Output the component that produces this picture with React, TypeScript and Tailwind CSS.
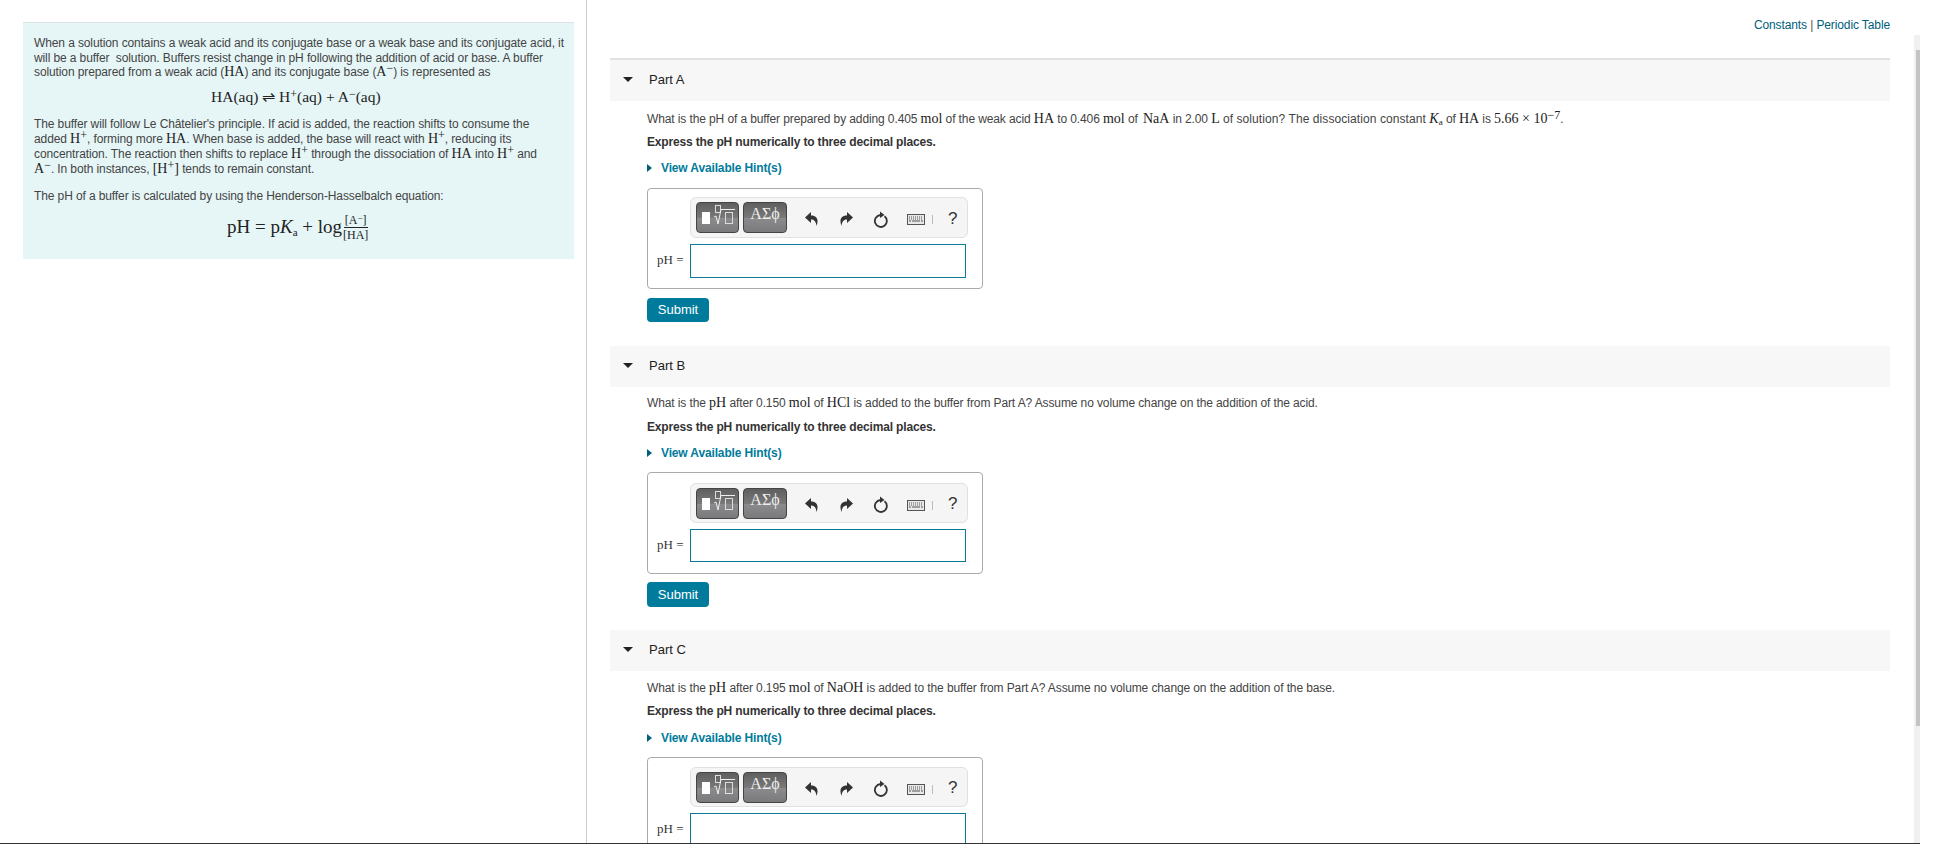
import { ReactNode } from 'react';

const M = ({ children }: { children: ReactNode }) => (
  <span className="font-['Liberation_Serif',serif] text-[14px] leading-none tracking-normal text-[#222]">{children}</span>
);

const Sup = ({ children }: { children: ReactNode }) => (
  <sup className="top-[-4px] text-[12px] leading-none font-['Liberation_Serif',serif]">{children}</sup>
);

const ReplyIcon = ({ flip }: { flip?: boolean }) => (
  <svg width="13" height="14" viewBox="0 0 13 14" className={flip ? '-scale-x-100' : ''}>
    <path d="M6 0L0 5.5 6 11V7.5c3 0 5 1.5 5.5 6.5 2-5 1.500-10.500-5.500-10.500z" fill="#333" />
  </svg>
);

const KeyboardIcon = () => (
  <svg width="18" height="11" viewBox="0 0 18 11" className="shrink-0">
    <rect x="0.5" y="0.5" width="17" height="10" fill="#e8e8e8" stroke="#555" />
    <path d="M2 3h14M2 5h14" stroke="#555" strokeDasharray="1 1" />
    <path d="M2 7h2M5 7h8M14 7h2" stroke="#555" />
  </svg>
);

const ResetIcon = () => (
  <svg width="15" height="17" viewBox="0 0 15 17">
    <path d="M11.500 5.200A6 6 0 1 1 7.500 4" fill="none" stroke="#333" strokeWidth="1.800" />
    <path d="M7 0.500l4.500 3.500-4.500 3z" fill="#333" />
  </svg>
);

const gloss = "bg-[linear-gradient(#5f5f5f_0%,#7a7a7a_52%,#8b8b8e_53%,#7a7a7d_100%)]";

const Toolbar = ({ className }: { className: string }) => (
  <div className={`ml-[42px] w-[278px] rounded-md border border-[#e0e0e0] bg-[#f5f5f5] flex items-center pl-[5px] ${className}`}>
    <div className={`w-[43px] h-[31px] rounded border border-[#444] ${gloss} flex items-start pl-[5px] gap-[4px] pt-[2px]`}>
      <div className="w-[8px] h-[12px] bg-white mt-[7px]" />
      <svg width="21" height="20" viewBox="0 0 21 20">
        <rect x="1.500" y="0.500" width="5" height="7" fill="none" stroke="#ddd" />
        <path d="M0 12l2-1 2 8 3-14.500h14" fill="none" stroke="#eee" />
        <rect x="11.500" y="7.500" width="7" height="11" fill="none" stroke="#ddd" />
      </svg>
    </div>
    <div className={`ml-[4px] w-[44px] h-[31px] rounded border border-[#444] ${gloss} text-center text-[#eee] font-['Liberation_Serif',serif] text-[16px] leading-[21px]`}>
      ΑΣϕ
    </div>
    <div className="ml-[18px] mt-[3px] w-[13px] flex justify-center">
      <ReplyIcon />
    </div>
    <div className="ml-[22px] mt-[3px] w-[13px] flex justify-center">
      <ReplyIcon flip />
    </div>
    <div className="ml-[19px] mt-[3px] w-[16px] flex justify-center">
      <ResetIcon />
    </div>
    <div className="ml-[19px] mt-[4px] flex items-center">
      <KeyboardIcon />
    </div>
    <div className="ml-[7px] mt-[4px] w-px h-[9px] bg-[#bbb]" />
    <div className="ml-[15px] mt-[2px] text-[17px] text-[#333]">?</div>
  </div>
);

type PartProps = {
  name: string;
  question: ReactNode;
  headerClass: string;
  questionClass: string;
  expressClass: string;
  hintClass: string;
  boxClass: string;
  toolbarClass: string;
  inputClass: string;
  submitClass: string;
};

const Part = ({
  name,
  question,
  headerClass,
  questionClass,
  expressClass,
  hintClass,
  boxClass,
  toolbarClass,
  inputClass,
  submitClass,
}: PartProps) => (
  <section>
    <div className={`bg-[#f7f7f7] flex items-center pl-[13px] pb-[2px] ${headerClass}`}>
      <span className="w-0 h-0 border-l-[5px] border-r-[5px] border-t-[5px] border-l-transparent border-r-transparent border-t-[#222]" />
      <span className="ml-[16px] text-[13px] text-[#222]">{name}</span>
    </div>
    <div className="pl-[37px]">
      <p className={`h-[16px] leading-[16px] text-[12px] tracking-[-0.11px] text-[#444] whitespace-nowrap ${questionClass}`}>
        {question}
      </p>
      <p className={`h-[16px] leading-[16px] text-[12px] font-bold tracking-[-0.16px] text-[#333] ${expressClass}`}>
        Express the pH numerically to three decimal places.
      </p>
      <div className={`h-[16px] flex items-center text-[12px] font-bold tracking-[-0.14px] text-[#007b9c] ${hintClass}`}>
        <span className="w-0 h-0 border-t-[4px] border-b-[4px] border-l-[5px] border-t-transparent border-b-transparent border-l-[#00607c]" />
        <span className="ml-[9px]">View Available Hint(s)</span>
      </div>
      <div className={`w-[336px] rounded border border-[#aaa] bg-white ${boxClass}`}>
        <Toolbar className={toolbarClass} />
        <div className="mt-[6px] flex items-center">
          <span className="w-[42px] pl-[9px] pb-[2px] text-[13px] text-[#333] font-['Liberation_Serif',serif]">pH =</span>
          <div className={`w-[276px] border border-[#0c7a96] bg-white ${inputClass}`} />
        </div>
      </div>
      <button className={`w-[62px] rounded-sm bg-[#007b9c] text-white text-[13px] block ${submitClass}`}>Submit</button>
    </div>
  </section>
);

export default function App() {
  return (
    <div className="h-screen overflow-hidden bg-white font-['Liberation_Sans',sans-serif]">
      <div className="w-[1920px] h-[844px] border-b border-[#333] flex overflow-hidden">
        <aside className="w-[587px] shrink-0 border-r border-[#c9cdd4] pt-[22px] pl-[23px]">
          <div className="w-[551px] h-[237px] bg-[#e6f6f7] border-t border-[#dde3e5] pl-[11px] pr-[8px] pt-[13px] text-[12px] leading-[14.5px] tracking-[-0.11px] text-[#444]">
            <p>
              When a solution contains a weak acid and its conjugate base or a weak base and its conjugate acid, it will
              be a buffer&nbsp; solution. Buffers resist change in pH following the addition of acid or base. A buffer
              solution prepared from a weak acid (<M>HA</M>) and its conjugate base (<M>A<Sup>−</Sup></M>) is represented as
            </p>
            <p className="mt-[8px] ml-[177px] font-['Liberation_Serif',serif] text-[15.5px] leading-[18px] tracking-normal text-[#222] whitespace-nowrap">
              HA(aq) ⇌ H<Sup>+</Sup>(aq) + A<Sup>−</Sup>(aq)
            </p>
            <p className="mt-[11px] leading-[15px]">
              The buffer will follow Le Châtelier's principle. If acid is added, the reaction shifts to consume the
              <br />
              added <M>H<Sup>+</Sup></M>, forming more <M>HA</M>. When base is added, the base will react with <M>H<Sup>+</Sup></M>,
              reducing its
              <br />
              concentration. The reaction then shifts to replace <M>H<Sup>+</Sup></M> through the dissociation of <M>HA</M> into{' '}
              <M>H<Sup>+</Sup></M> and
              <br />
              <M>A<Sup>−</Sup></M>. In both instances, <M>[H<Sup>+</Sup>]</M> tends to remain constant.
            </p>
            <p className="mt-[12px]">The pH of a buffer is calculated by using the Henderson-Hasselbalch equation:</p>
            <div className="mt-[10px] ml-[193px] flex items-center font-['Liberation_Serif',serif] text-[19px] tracking-normal text-[#222] whitespace-nowrap">
              <span>
                pH = p<i>K</i>
                <sub className="text-[11px]">a</sub> + log
              </span>
              <span className="ml-[1px] flex flex-col items-center text-[12px] leading-[14px]">
                <span className="border-b border-[#222] px-[1px]">
                  [A<sup className="top-[-3px] text-[9px] leading-none">−</sup>]
                </span>
                <span>[HA]</span>
              </span>
            </div>
          </div>
        </aside>
        <main className="flex-1 min-w-0 pl-[23px] pr-[24px]">
          <div className="h-[58px] pt-[17px] text-right text-[12px] leading-[16px] tracking-[-0.11px] text-[#00607c]">
            Constants <span className="text-[#555]">|</span> Periodic Table
          </div>
          <Part
            name="Part A"
            headerClass="h-[43px] border-t-2 border-[#e2e2e2]"
            questionClass="mt-[10px]"
            expressClass="mt-[7px]"
            hintClass="mt-[10px]"
            boxClass="mt-[12px] h-[101px]"
            toolbarClass="mt-[8px] h-[41px]"
            inputClass="h-[34px]"
            submitClass="mt-[9px] mb-[24px] h-[24px]"
            question={
              <>
                What is the pH of a buffer prepared by adding 0.405 <M>mol</M> of the weak acid <M>HA</M> to 0.406{' '}
                <M>mol</M> of <span className="ml-[2px]"><M>NaA</M></span> in 2.00 <M>L</M>{' '}
                <span className="tracking-[0.08px]">of solution? The dissociation constant </span>
                <M><i>K</i><sub className="text-[9px]">a</sub></M> of <M>HA</M> is <M>5.66 × 10<Sup>−7</Sup></M>.
              </>
            }
          />
          <Part
            name="Part B"
            headerClass="h-[41px]"
            questionClass="mt-[8px]"
            expressClass="mt-[8px]"
            hintClass="mt-[10px]"
            boxClass="mt-[11px] h-[102px]"
            toolbarClass="mt-[10px] h-[40px]"
            inputClass="h-[33px]"
            submitClass="mt-[8px] mb-[23px] h-[25px]"
            question={
              <>
                What is the <M>pH</M> after 0.150 <M>mol</M> of <M>HCl</M> is added to the buffer from Part A? Assume no
                volume change on the addition of the acid.
              </>
            }
          />
          <Part
            name="Part C"
            headerClass="h-[41px]"
            questionClass="mt-[9px]"
            expressClass="mt-[7px]"
            hintClass="mt-[11px]"
            boxClass="mt-[11px] h-[102px]"
            toolbarClass="mt-[9px] h-[40px]"
            inputClass="h-[33px]"
            submitClass="mt-[8px] mb-[23px] h-[25px]"
            question={
              <>
                What is the <M>pH</M> after 0.195 <M>mol</M> of <M>NaOH</M> is added to the buffer from Part A? Assume no
                volume change on the addition of the base.
              </>
            }
          />
        </main>
        <div className="w-[6px] mt-[35px] bg-[#f0f0f0] pl-[2px] shrink-0">
          <div className="mt-[15px] h-[676px] bg-[#c4c4c4]" />
        </div>
      </div>
    </div>
  );
}
